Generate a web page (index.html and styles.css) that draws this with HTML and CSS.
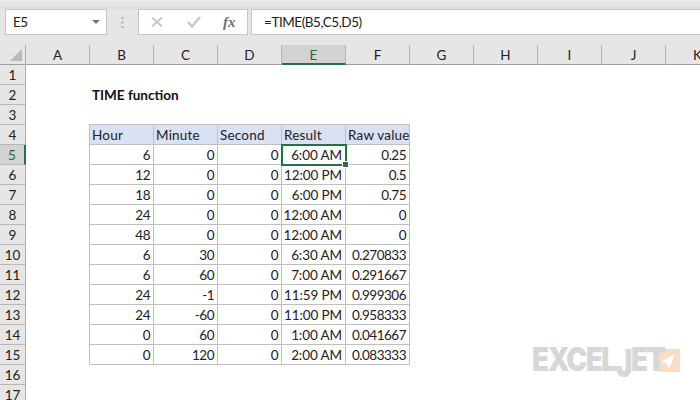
FILE: index.html
```html
<!DOCTYPE html>
<html lang="en">
<head>
<meta charset="utf-8">
<title>TIME function</title>
<link rel="stylesheet" href="styles.css">
</head>
<body>
<div class="app">
  <div class="ribbon-edge"></div>
  <div class="formula-bar">
    <div class="name-box"><span>E5</span><svg class="caret" width="8" height="5" viewBox="0 0 8 5"><path d="M0 0h8L4 4z"/></svg></div>
    <svg class="grip" width="3" height="11" viewBox="0 0 3 11"><path d="M0 0h3v2H0zM0 4.500h3v2H0zM0 9h3v2H0z"/></svg>
    <div class="fx-box">
      <svg class="tool" width="12" height="12" viewBox="0 0 12 12"><path d="M1 1.500l10 9M11 1.500l-10 9"/></svg>
      <svg class="tool tool-check" width="14" height="12" viewBox="0 0 14 12"><path d="M1 6l4 4.500 8-9.500"/></svg>
      <span class="fx">fx</span>
    </div>
    <div class="formula-input">=TIME(B5,C5,D5)</div>
  </div>
  <div class="col-heads">
    <div class="corner"><svg width="12" height="12" viewBox="0 0 12 12"><path d="M12 0v12H0z"/></svg></div>
    <div class="col-head">A</div>
    <div class="col-head">B</div>
    <div class="col-head">C</div>
    <div class="col-head">D</div>
    <div class="col-head col-active">E</div>
    <div class="col-head">F</div>
    <div class="col-head">G</div>
    <div class="col-head">H</div>
    <div class="col-head">I</div>
    <div class="col-head">J</div>
    <div class="col-head">K</div>
  </div>
  <div class="sheet">
    <div class="row-head">1</div>
    <div class="row-head">2</div>
    <div class="row-head">3</div>
    <div class="row-head">4</div>
    <div class="row-head row-active">5</div>
    <div class="row-head">6</div>
    <div class="row-head">7</div>
    <div class="row-head">8</div>
    <div class="row-head">9</div>
    <div class="row-head">10</div>
    <div class="row-head">11</div>
    <div class="row-head">12</div>
    <div class="row-head">13</div>
    <div class="row-head">14</div>
    <div class="row-head">15</div>
    <div class="row-head">16</div>
    <div class="row-head">17</div>
    <div class="title">TIME function</div>
    <div class="data">
      <div class="th">Hour</div><div class="th">Minute</div><div class="th">Second</div><div class="th">Result</div><div class="th">Raw value</div>
      <div class="td">6</div><div class="td">0</div><div class="td">0</div><div class="td time selected">6:00 AM<span class="handle"></span></div><div class="td">0.25</div>
      <div class="td">12</div><div class="td">0</div><div class="td">0</div><div class="td time">12:00 PM</div><div class="td">0.5</div>
      <div class="td">18</div><div class="td">0</div><div class="td">0</div><div class="td time">6:00 PM</div><div class="td">0.75</div>
      <div class="td">24</div><div class="td">0</div><div class="td">0</div><div class="td time">12:00 AM</div><div class="td">0</div>
      <div class="td">48</div><div class="td">0</div><div class="td">0</div><div class="td time">12:00 AM</div><div class="td">0</div>
      <div class="td">6</div><div class="td">30</div><div class="td">0</div><div class="td time">6:30 AM</div><div class="td">0.270833</div>
      <div class="td">6</div><div class="td">60</div><div class="td">0</div><div class="td time">7:00 AM</div><div class="td">0.291667</div>
      <div class="td">24</div><div class="td">-1</div><div class="td">0</div><div class="td time">11:59 PM</div><div class="td">0.999306</div>
      <div class="td">24</div><div class="td">-60</div><div class="td">0</div><div class="td time">11:00 PM</div><div class="td">0.958333</div>
      <div class="td">0</div><div class="td">60</div><div class="td">0</div><div class="td time">1:00 AM</div><div class="td">0.041667</div>
      <div class="td">0</div><div class="td">120</div><div class="td">0</div><div class="td time">2:00 AM</div><div class="td">0.083333</div>
    </div>
  </div>
  <div class="logo">
    <span class="logo-text">EXCEL<span class="logo-j">J</span>ET</span>
    <svg class="logo-mark" width="22" height="23" viewBox="0 0 22 23"><path fill="#fbdcc4" d="M0 0h22v23H0z"/><path fill="#fff" d="M17 5L3 13l6 1.500L11 20z"/></svg>
  </div>
</div>
</body>
</html>
```
FILE: styles.css
```css
* { box-sizing: border-box; }
html, body { margin: 0; padding: 0; }
body {
  width: 700px;
  height: 400px;
  overflow: hidden;
  background: #fff;
  font-family: "Lato", "Liberation Sans", sans-serif;
  font-size: 13.5px;
  color: #222;
}
.app { position: relative; width: 700px; height: 400px; overflow: hidden; }
.ribbon-edge {
  height: 9px;
  background: linear-gradient(#ececec, #dedede);
}
.formula-bar {
  display: flex;
  align-items: flex-start;
  height: 36px;
  padding-left: 5px;
  background: #e6e6e6;
}
.name-box {
  display: flex;
  align-items: center;
  justify-content: space-between;
  width: 102px;
  height: 26px;
  padding: 0 6px 0 7px;
  letter-spacing: -0.500px;
  background: #fff;
  border: 1px solid #c6c6c6;
}
.caret { fill: #777; }
.grip { fill: #c0c0c0; margin: 8px 14px 0 14px; }
.fx-box {
  display: flex;
  align-items: center;
  width: 110px;
  height: 26px;
  padding-left: 12px;
  background: #fff;
  border: 1px solid #c6c6c6;
}
.tool { fill: none; stroke: #c8c8c8; stroke-width: 2; }
.tool-check { margin-left: 24px; stroke-width: 2.500; }
.fx {
  margin-left: 22px;
  font-family: "Liberation Serif", serif;
  font-style: italic;
  font-weight: 700;
  font-size: 15px;
  color: #707070;
}
.formula-input {
  flex: 1;
  height: 26px;
  margin-left: 3px;
  padding-left: 12px;
  line-height: 24px;
  letter-spacing: -0.450px;
  background: #fff;
  border: 1px solid #c6c6c6;
  border-right: 0;
}
.col-heads {
  display: flex;
  height: 20px;
  background: #e6e6e6;
}
.corner {
  flex: none;
  width: 26px;
  padding: 4px 0 0 10px;
  border-right: 1px solid #b0b0b0;
  border-bottom: 1px solid #a0a0a0;
  fill: #b8b8b8;
}
.corner svg { display: block; }
.col-head {
  flex: none;
  width: 64px;
  text-align: center;
  line-height: 21px;
  border-right: 1px solid #b4b4b4;
  border-bottom: 1px solid #a0a0a0;
}
.col-active {
  background: #d2d2d2;
  color: #1d6b41;
  border-bottom: 2px solid #217346;
}
.sheet {
  display: grid;
  grid-template-columns: 26px repeat(11, 64px);
  grid-auto-rows: 20px;
}
.row-head {
  grid-column: 1;
  text-align: center;
  line-height: 21px;
  background: #e6e6e6;
  border-right: 1px solid #b0b0b0;
  border-bottom: 1px solid #b8b8b8;
}
.row-active {
  background: #d2d2d2;
  color: #1d6b41;
  border-right: 2px solid #217346;
}
.title {
  grid-column: 3 / span 3;
  grid-row: 2;
  padding-left: 2px;
  line-height: 20px;
  font-weight: 700;
  color: #111;
}
.data {
  grid-column: 3 / span 5;
  grid-row: 4 / span 12;
  display: grid;
  grid-template-columns: repeat(5, 64px);
  grid-auto-rows: 20px;
  width: 321px;
  height: 241px;
  margin: -1px 0 0 -1px;
  border-top: 1px solid #bfbfbf;
  border-left: 1px solid #bfbfbf;
}
.th, .td {
  line-height: 21px;
  border-right: 1px solid #bfbfbf;
  border-bottom: 1px solid #bfbfbf;
  white-space: nowrap;
}
.th {
  padding-left: 2px;
  letter-spacing: 0.200px;
  background: #d9e1f2;
  overflow: hidden;
}
.td {
  padding-right: 3px;
  text-align: right;
  letter-spacing: -0.500px;
}
.td.time { letter-spacing: -0.100px; }
.selected {
  position: relative;
  outline: 2px solid #217346;
  outline-offset: -1px;
}
.handle {
  position: absolute;
  right: -3px;
  bottom: -3px;
  width: 5px;
  height: 5px;
  background: #217346;
  box-shadow: 0 0 0 1px #fff;
}
.logo {
  position: absolute;
  left: 532px;
  top: 349px;
  display: flex;
  gap: 3px;
}
.logo-text {
  display: block;
  width: 123px;
  height: 23px;
  font-family: "Inter", "Liberation Sans", sans-serif;
  font-weight: 900;
  font-size: 28px;
  line-height: 23px;
  letter-spacing: -1.500px;
  white-space: nowrap;
  color: #d6d8d8;
  transform: scaleY(1.150);
  transform-origin: 0 50%;
}
.logo-j {
  display: inline-block;
  transform: translateY(3px) scaleY(1.200);
}
```
